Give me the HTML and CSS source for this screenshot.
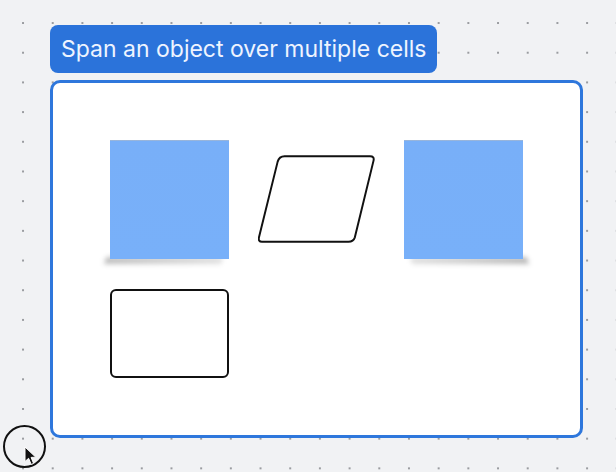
FILE: index.html
```html
<!DOCTYPE html>
<html>
<head>
<meta charset="utf-8">
<link rel="stylesheet" href="styles.css">
</head>
<body>
<div class="canvas">
  <div class="title">Span an object over multiple cells</div>
  <div class="frame">
    <div class="grid">
      <div class="sticky sticky-left"></div>
      <div class="cell">
        <svg class="para" width="120" height="90" viewBox="0 0 120 90">
          <path d="M29 1.5 L114 1.5 Q118.5 1.5 117.5 6 L98.5 84 Q97 88.5 92 88.5 L4 88.5 Q0 88.5 1 84 L20 7 Q21.5 1.5 27 1.5 Z" fill="#fff" stroke="#111" stroke-width="2" stroke-linejoin="round"/>
        </svg>
      </div>
      <div class="sticky sticky-right"></div>
      <div class="rect"></div>
    </div>
  </div>
</div>
<div class="cursor">
  <svg width="16" height="22" viewBox="0 0 16 22">
    <path d="M1 1 L1 15.5 L4.6 12.3 L7.2 18.4 L9.6 17.4 L7.1 11.4 L11.8 11.2 Z" fill="#111" stroke="#fff" stroke-width="1"/>
  </svg>
</div>
</body>
</html>
```
FILE: styles.css
```css
html, body {
  margin: 0;
  padding: 0;
}
body {
  width: 616px;
  height: 472px;
  overflow: hidden;
  background-color: #f1f2f4;
  background-image: radial-gradient(circle, #9a9ca0 0.9px, transparent 1.3px);
  background-size: 29.7px 29.7px;
  background-position: 8.2px 8.2px;
  font-family: Inter, "Noto Sans", sans-serif;
  position: relative;
}
.canvas {
  padding: 25px 0 0 50px;
  display: flex;
  flex-direction: column;
  align-items: flex-start;
}
.title {
  height: 48px;
  box-sizing: border-box;
  padding: 0 11px;
  background: #2b73da;
  color: #eef4ff;
  border-radius: 8px;
  font-size: 23px;
  line-height: 48px;
  width: 387px;
  white-space: nowrap;
}
.frame {
  margin-top: 7px;
  width: 533px;
  height: 358px;
  box-sizing: border-box;
  border: 3px solid #2e77dc;
  border-radius: 10px;
  background: #fff;
  padding: 57px 0 0 57px;
  position: relative;
  z-index: 0;
}
.grid {
  display: grid;
  grid-template-columns: 119px 119px 119px;
  grid-template-rows: 119px 89px;
  column-gap: 28px;
  row-gap: 30px;
}
.cell {
  display: flex;
  align-items: flex-start;
  justify-content: flex-start;
}
.para {
  display: block;
  margin: 14px 0 0 1px;
}
.sticky {
  background: linear-gradient(#a9b8cc 0, #78aff8 1.5px, #78b0f9 100%);
  position: relative;
}
.sticky::after {
  content: "";
  position: absolute;
  bottom: 0;
  height: 7px;
  z-index: -1;
  filter: blur(2.5px);
}
.sticky-left::after {
  left: -4px;
  right: 6px;
  background: linear-gradient(90deg, rgba(0,0,0,0.26), rgba(0,0,0,0.12));
  transform: skewX(-10deg) translateY(5px);
}
.sticky-right::after {
  left: 6px;
  right: -4px;
  background: linear-gradient(90deg, rgba(0,0,0,0.12), rgba(0,0,0,0.28));
  transform: skewX(10deg) translateY(5px);
}
.rect {
  box-sizing: border-box;
  border: 2px solid #111;
  border-radius: 6px;
  background: #fff;
}
.cursor {
  position: absolute;
  left: 3px;
  top: 425px;
  width: 43px;
  height: 43px;
  box-sizing: border-box;
  border: 2px solid #111;
  border-radius: 50%;
}
.cursor svg {
  position: absolute;
  left: 19px;
  top: 19px;
}
```
